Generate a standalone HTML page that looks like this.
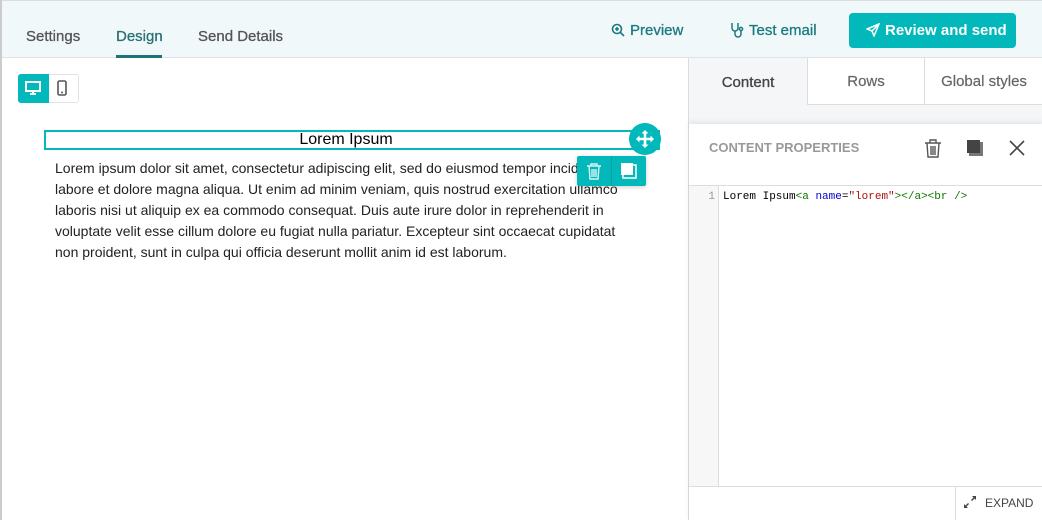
<!DOCTYPE html>
<html><head><style>
*{box-sizing:border-box;margin:0;padding:0}
body{width:1042px;height:520px;overflow:hidden;background:#fff;font-family:"Liberation Sans",sans-serif;position:relative}
.hdr{position:absolute;left:0;top:0;width:1042px;height:58px;background:#f0f8fa;border-top:1px solid #ddd;border-bottom:1px solid #dde3e6}
.tab{position:absolute;top:27px;font-size:15px;color:#555;-webkit-text-stroke:0.3px}
.abs{position:absolute}
.lb{position:absolute;left:0;top:0;width:2px;height:520px;background:#ccc}
.rp{position:absolute;left:688px;top:58px;width:354px;height:462px;background:#f5f6f7;border-left:1px solid #ddd}
</style></head><body>
<div class="hdr">
<div class="tab" style="left:26px">Settings</div>
<div class="tab" style="left:116px;color:#2a6f73">Design</div>
<div class="abs" style="left:116px;top:54px;width:46px;height:3px;background:#1b7377"></div>
<div class="tab" style="left:198px">Send Details</div>
<svg class="abs" style="left:611px;top:22px" width="14" height="14" viewBox="0 0 14 14" fill="none" stroke="#1b7a80" stroke-width="1.6"><circle cx="6" cy="6" r="4.5"/><path d="M9.5 9.5L13 13M6 4v4M4 6h4"/></svg>
<div class="abs" style="left:630px;top:21px;font-size:15px;color:#1b7a80;-webkit-text-stroke:0.3px">Preview</div>
<svg class="abs" style="left:730px;top:21px" width="14" height="16" viewBox="0 0 14 16" fill="none" stroke="#1b7a80" stroke-width="1.5"><path d="M2 1v5a3 3 0 0 0 6 0V1M5 9v3a3 3 0 0 0 6 0V9"/><circle cx="11" cy="7" r="1.6"/></svg>
<div class="abs" style="left:749px;top:21px;font-size:15px;color:#1b7a80;-webkit-text-stroke:0.3px">Test email</div>
<div class="abs" style="left:849px;top:12px;width:167px;height:35px;background:#02b8bb;border-radius:4px"></div>
<svg class="abs" style="left:866px;top:22px" width="14" height="14" viewBox="0 0 14 14" fill="none" stroke="#fff" stroke-width="1.5"><path d="M13 1L1 6l5 2 2 5zM6 8l7-7"/></svg>
<div class="abs" style="left:885px;top:21px;font-size:15px;color:#fff;font-weight:bold">Review and send</div>
</div>
<div class="lb"></div>
<div class="abs" style="left:18px;top:74px;width:61px;height:29px;border:1px solid #e3e3e3;border-radius:3px;background:#fff"></div>
<div class="abs" style="left:18px;top:74px;width:31px;height:29px;background:#02b8bb;border-radius:3px 0 0 3px"></div>
<svg class="abs" style="left:25px;top:81px" width="16" height="14" viewBox="0 0 16 14" fill="none" stroke="#fff" stroke-width="2"><rect x="1" y="1" width="14" height="9"/><path d="M5 13h6M8 10v3"/></svg>
<svg class="abs" style="left:57px;top:80px" width="10" height="16" viewBox="0 0 10 16"><rect x="1" y="1" width="8" height="14" rx="1.5" fill="none" stroke="#555" stroke-width="1.6"/><circle cx="5" cy="12.5" r="1" fill="#555"/></svg>
<div class="abs" style="left:44px;top:130px;width:616px;height:20px;border:2px solid #02b8bb"></div>
<div class="abs" style="left:38px;top:130px;width:616px;text-align:center;font-size:16px;color:#000;line-height:19px">Lorem Ipsum</div>
<div class="abs" style="left:55px;top:158px;width:575px;font-size:14px;line-height:21px;color:#222">Lorem ipsum dolor sit amet, consectetur adipiscing elit, sed do eiusmod tempor incididunt ut labore et dolore magna aliqua. Ut enim ad minim veniam, quis nostrud exercitation ullamco laboris nisi ut aliquip ex ea commodo consequat. Duis aute irure dolor in reprehenderit in voluptate velit esse cillum dolore eu fugiat nulla pariatur. Excepteur sint occaecat cupidatat non proident, sunt in culpa qui officia deserunt mollit anim id est laborum.</div>
<div class="abs" style="left:629px;top:123px;width:32px;height:32px;border-radius:50%;background:#02b8bb"></div>
<svg class="abs" style="left:635px;top:129px" width="20" height="20" viewBox="0 0 20 20" fill="#fff"><path d="M10 1l3.5 3.5h-2.2v4.2h4.2V6.5L19 10l-3.5 3.5v-2.2h-4.2v4.2h2.2L10 19l-3.5-3.5h2.2v-4.2H4.5v2.2L1 10l3.5-3.5v2.2h4.2V4.5H6.5z"/></svg>
<div class="abs" style="left:577px;top:156px;width:69px;height:30px;background:#02b8bb;border-radius:2px;box-shadow:0 1px 4px rgba(0,0,0,.2)"></div>
<div class="abs" style="left:611px;top:156px;width:1px;height:30px;background:#0a9ea0"></div>
<svg class="abs" style="left:585px;top:162px" width="18" height="18" viewBox="0 0 18 18" fill="none" stroke="#d9f5f5" stroke-width="1.4"><path d="M2 4h14M6 4V2h6v2M4 4l1 13h8l1-13M7 7v8M9 7v8M11 7v8"/></svg>
<svg class="abs" style="left:620px;top:162px" width="17" height="17" viewBox="0 0 17 17"><rect x="3" y="3" width="13" height="13" fill="none" stroke="#fff" stroke-width="1.5"/><rect x="1" y="1" width="12" height="12" fill="#fff"/></svg>
<div class="rp">
<div class="abs" style="left:0;top:2px;width:118px;height:46px;background:#f5f6f7;font-size:15px;color:#444;text-align:center;line-height:46px;-webkit-text-stroke:0.3px">Content</div>
<div class="abs" style="left:118px;top:0;width:117px;height:47px;background:#fff;border-left:1px solid #ddd;border-bottom:1px solid #ddd;font-size:15px;color:#666;text-align:center;line-height:48px;-webkit-text-stroke:0.2px">Rows</div>
<div class="abs" style="left:235px;top:0;width:119px;height:47px;background:#fff;border-left:1px solid #ddd;border-bottom:1px solid #ddd;font-size:15px;color:#666;text-align:center;line-height:48px;-webkit-text-stroke:0.2px">Global styles</div>
<div class="abs" style="left:0;top:66px;width:354px;height:396px;background:#fff;box-shadow:0 -2px 5px rgba(0,0,0,.08)"></div>
<div class="abs" style="left:20px;top:82px;font-size:13px;font-weight:bold;color:#999">CONTENT PROPERTIES</div>
<svg class="abs" style="left:235px;top:81px" width="18" height="19" viewBox="0 0 18 19" fill="none" stroke="#555" stroke-width="1.4"><path d="M1 4h16M6 4V1h6v3M3 4l1 14h10l1-14M7 7v9M9 7v9M11 7v9"/></svg>
<svg class="abs" style="left:277px;top:81px" width="18" height="18" viewBox="0 0 18 18"><rect x="3" y="3" width="14" height="14" fill="#777"/><rect x="1" y="1" width="13" height="13" fill="#444"/></svg>
<svg class="abs" style="left:320px;top:82px" width="16" height="16" viewBox="0 0 16 16" stroke="#444" stroke-width="1.6"><path d="M1 1l14 14M15 1L1 15"/></svg>
<div class="abs" style="left:0;top:127px;width:354px;height:1px;background:#ddd"></div>
<div class="abs" style="left:0;top:128px;width:30px;height:300px;background:#f7f7f7;border-right:1px solid #ddd"></div>
<div class="abs" style="left:0;top:133px;width:26px;text-align:right;font:11px 'Liberation Mono',monospace;color:#999">1</div>
<div class="abs" style="left:34px;top:133px;font:11px 'Liberation Mono',monospace;color:#000;white-space:pre">Lorem Ipsum<span style="color:#170">&lt;a</span> <span style="color:#00c">name</span>=<span style="color:#a11">"lorem"</span><span style="color:#170">&gt;&lt;/a&gt;&lt;br /&gt;</span></div>
<div class="abs" style="left:0;top:428px;width:354px;height:1px;background:#ddd"></div>
<div class="abs" style="left:266px;top:428px;width:1px;height:34px;background:#ddd"></div>
<svg class="abs" style="left:275px;top:438px" width="12" height="12" viewBox="0 0 12 12" fill="#444"><path d="M0 12V8l1.5 1.5L4 7l1 1-2.5 2.5L4 12zM12 0v4l-1.5-1.5L8 5 7 4l2.5-2.5L8 0z"/></svg>
<div class="abs" style="left:296px;top:438px;font-size:12px;color:#444">EXPAND</div>
</div>
</body></html>
